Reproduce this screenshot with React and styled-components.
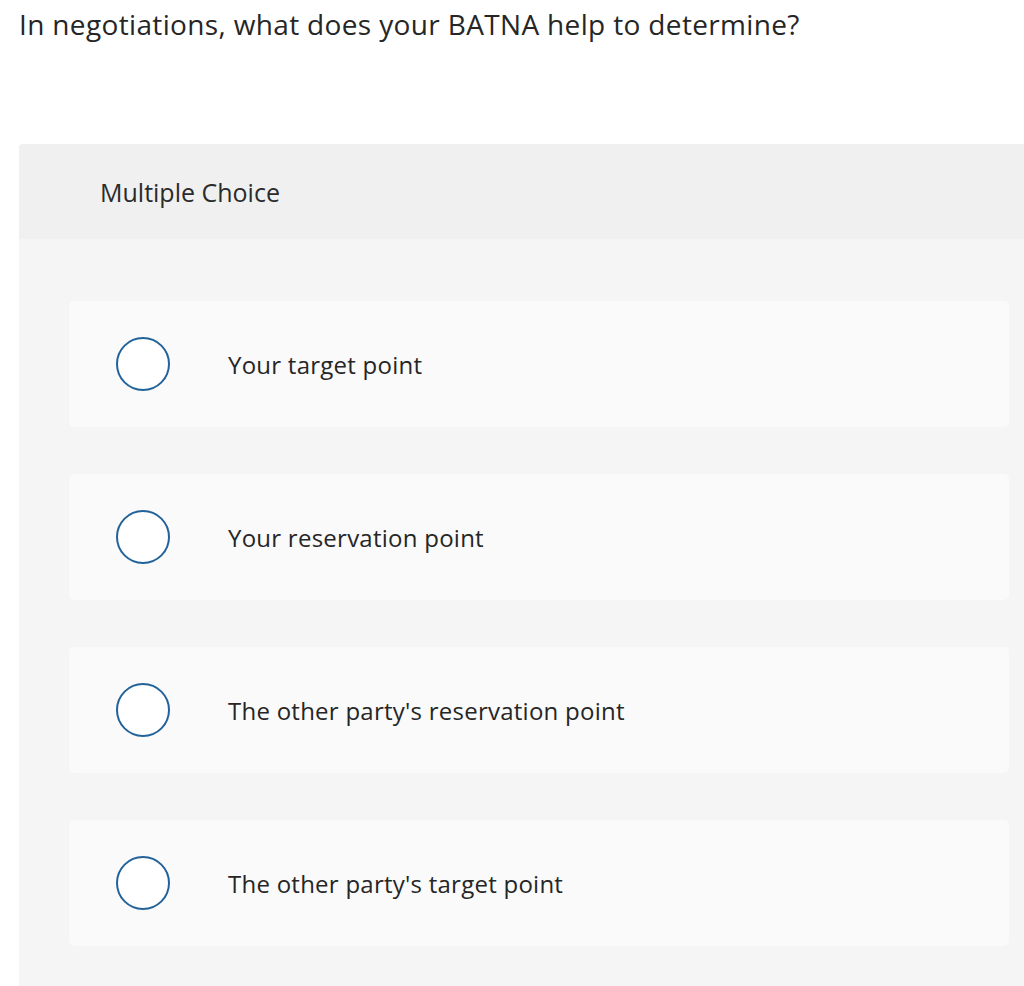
import React from "react";
import styled, { createGlobalStyle } from "styled-components";

const GlobalStyle = createGlobalStyle`
  html, body {
    margin: 0;
    padding: 0;
    background: #ffffff;
    overflow: hidden;
  }
  body {
    font-family: "Open Sans", "Liberation Sans", sans-serif;
    color: #2b2b2b;
  }
`;

const Page = styled.div`
  width: 1024px;
  height: 986px;
  overflow: hidden;
  padding: 0 0 0 19px;
  box-sizing: border-box;
`;

const Question = styled.h1`
  margin: 0;
  padding-top: 8px;
  height: 144px;
  box-sizing: border-box;
  font-size: 28px;
  font-weight: 400;
  line-height: 32px;
  letter-spacing: 0.35px;
  color: #262626;
`;

const Panel = styled.section`
  width: 1040px;
  background: #f5f5f5;
  border-radius: 4px 4px 0 0;
  overflow: hidden;
`;

const PanelHeader = styled.div`
  height: 95px;
  background: #f0f0f0;
  display: flex;
  align-items: center;
  padding-left: 81px;
  font-size: 25px;
  color: #2b2b2b;
`;

const Choices = styled.div`
  display: flex;
  flex-direction: column;
  gap: 47px;
  padding: 62px 50px 60px 50px;
`;

const Choice = styled.label`
  height: 126px;
  background: #fafafa;
  border-radius: 5px;
  display: flex;
  align-items: center;
  padding-left: 47px;
  cursor: pointer;
`;

const Radio = styled.span`
  width: 54px;
  height: 54px;
  box-sizing: border-box;
  border: 2px solid #22629a;
  border-radius: 50%;
  background: #ffffff;
  flex-shrink: 0;
`;

const ChoiceText = styled.span`
  margin-left: 58px;
  font-size: 24px;
  letter-spacing: 0.25px;
  color: #262626;
`;

const options = [
  "Your target point",
  "Your reservation point",
  "The other party's reservation point",
  "The other party's target point",
];

export default function App() {
  return (
    <>
      <GlobalStyle />
      <Page>
        <Question>In negotiations, what does your BATNA help to determine?</Question>
        <Panel>
          <PanelHeader>Multiple Choice</PanelHeader>
          <Choices>
            {options.map((text) => (
              <Choice key={text}>
                <Radio />
                <ChoiceText>{text}</ChoiceText>
              </Choice>
            ))}
          </Choices>
        </Panel>
      </Page>
    </>
  );
}
